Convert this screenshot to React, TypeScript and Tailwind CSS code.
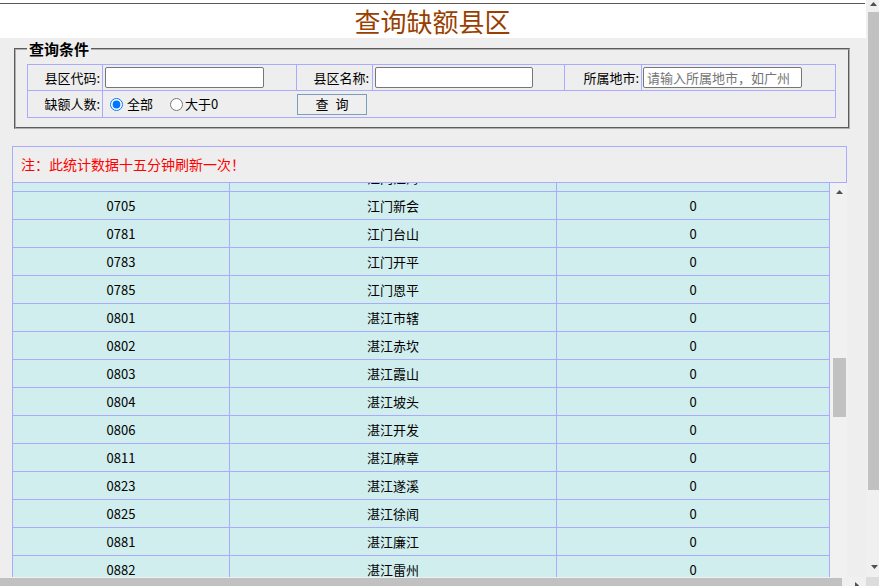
import React from "react";

const rows: [string, string][] = [
  ["0704", "江门江海"],
  ["0705", "江门新会"],
  ["0781", "江门台山"],
  ["0783", "江门开平"],
  ["0785", "江门恩平"],
  ["0801", "湛江市辖"],
  ["0802", "湛江赤坎"],
  ["0803", "湛江霞山"],
  ["0804", "湛江坡头"],
  ["0806", "湛江开发"],
  ["0811", "湛江麻章"],
  ["0823", "湛江遂溪"],
  ["0825", "湛江徐闻"],
  ["0881", "湛江廉江"],
  ["0882", "湛江雷州"],
];

const font = { fontFamily: '"Noto Sans CJK SC", "Microsoft YaHei", sans-serif' };

function Tri({ dir }: { dir: "up" | "down" | "right" }) {
  const pts =
    dir === "up" ? "0,4 3.5,0 7,4" : dir === "down" ? "0,0 7,0 3.5,4" : "0,0 4,3.5 0,7";
  const w = dir === "right" ? 4 : 7;
  const h = dir === "right" ? 7 : 4;
  return (
    <svg width={w} height={h} viewBox={`0 0 ${w} ${h}`} className="block">
      <polygon points={pts} fill="#505050" />
    </svg>
  );
}

export default function App() {
  return (
    <div
      className="w-[879px] h-[586px] overflow-hidden flex flex-col bg-[#eeeeee] text-black"
      style={font}
    >
      <div className="flex h-[577px]">
        {/* page */}
        <div className="w-[866px] h-[577px] overflow-hidden flex flex-col bg-[#eeeeee]">
          <div className="h-[38px] bg-white pt-[3px] shrink-0">
            <div className="h-[35px] border-t border-[#5a5a5a] flex items-center justify-center w-[865px]">
              <h1 className="text-[26px] leading-[30px] text-[#993f00] font-normal">查询缺额县区</h1>
            </div>
          </div>

          <fieldset className="ml-[14px] mt-[3px] w-[836px] border-2 [border-style:groove] border-[#b0b0b0] px-[10px] pt-[7px] pb-[9px] shrink-0 min-w-0">
            <legend className="ml-[1px] px-[2px] text-[15px] leading-[16px] font-bold">查询条件</legend>
            <div className="ml-[1px] w-[809px] grid grid-cols-[75px_194px_76px_192px_77px_194px] border-l border-t border-[#aaaaff] text-[13px]">
              <div className="h-[26px] border-r border-b border-[#aaaaff] flex items-center justify-end pr-[2px]">县区代码:</div>
              <div className="h-[26px] border-r border-b border-[#aaaaff] flex items-center pl-[2px]">
                <input className="w-[159px] h-[21px] bg-white border border-[#767676] rounded-[2px] px-[2px] text-[13px] outline-none" />
              </div>
              <div className="h-[26px] border-r border-b border-[#aaaaff] flex items-center justify-end pr-[3px]">县区名称:</div>
              <div className="h-[26px] border-r border-b border-[#aaaaff] flex items-center pl-[2px]">
                <input className="w-[158px] h-[21px] bg-white border border-[#767676] rounded-[2px] px-[2px] text-[13px] outline-none" />
              </div>
              <div className="h-[26px] border-r border-b border-[#aaaaff] flex items-center justify-end pr-[2px]">所属地市:</div>
              <div className="h-[26px] border-r border-b border-[#aaaaff] flex items-center pl-[1px]">
                <input
                  placeholder="请输入所属地市，如广州"
                  className="w-[159px] h-[21px] bg-white border border-[#767676] rounded-[2px] px-[3px] text-[13px] outline-none placeholder:text-[#757575]"
                />
              </div>

              <div className="h-[27px] border-r border-b border-[#aaaaff] flex items-center justify-end pr-[2px]">缺额人数:</div>
              <div className="col-span-5 h-[27px] border-r border-b border-[#aaaaff] flex items-center">
                <div className="w-[193px] flex items-center pl-[2px]">
                  <input type="radio" name="n" defaultChecked className="ml-[5px] mr-[4px] w-[13px] h-[13px]" />
                  <span>全部</span>
                  <input type="radio" name="n" className="ml-[17px] mr-[2px] w-[13px] h-[13px]" />
                  <span>大于0</span>
                </div>
                <button className="ml-[1px] w-[70px] h-[21px] border border-[#7b9ebb] bg-[#efefef] flex items-center justify-center gap-[7px] text-[13px]">
                  <span>查</span>
                  <span>询</span>
                </button>
              </div>
            </div>
          </fieldset>

          <div className="ml-[12px] mt-[17px] w-[835px] h-[37px] border border-[#aaaaff] bg-[#eeeeee] flex items-center pl-[8px] text-[14px] text-[#ff0000] shrink-0">
            注：此统计数据十五分钟刷新一次！
          </div>

          <div className="ml-[12px] w-[835px] h-[394px] flex overflow-hidden shrink-0">
            <div className="w-[818px] h-[394px] overflow-hidden">
              <div className="mt-[-20px] border-l border-r border-[#aaaaff] text-[13px]">
                {rows.map(([code, name]) => (
                  <div key={code} className="grid grid-cols-[217px_327px_272px] h-[28px] border-t border-[#aaaaff] bg-[#d0eeee]">
                    <div className="border-r border-[#aaaaff] flex items-center justify-center">{code}</div>
                    <div className="border-r border-[#aaaaff] flex items-center justify-center">{name}</div>
                    <div className="flex items-center justify-center">0</div>
                  </div>
                ))}
              </div>
            </div>
            <div className="w-[17px] h-[394px] bg-[#f1f1f1] flex flex-col items-center">
              <div className="mt-[7px] ml-[1px]">
                <Tri dir="up" />
              </div>
              <div className="mt-[164px] ml-[2px] w-[13px] h-[59px] bg-[#c1c1c1]" />
            </div>
          </div>
        </div>

        {/* outer vertical scrollbar */}
        <div className="w-[13px] h-[577px] bg-[#f0f0f0] flex flex-col">
          <div className="h-[12px] flex items-start justify-center pt-[2px] pl-[2px]">
            <Tri dir="up" />
          </div>
          <div className="ml-[2px] w-[11px] h-[478px] bg-[#c1c1c1]" />
          <div className="flex-1 flex items-end justify-center pb-[8px] pl-[4px]">
            <Tri dir="down" />
          </div>
        </div>
      </div>

      {/* outer horizontal scrollbar */}
      <div className="flex h-[9px]">
        <div className="w-[866px] h-[9px] bg-[#f0f0f0] flex">
          <div className="w-[842px] mt-[1px] h-[8px] bg-[#c1c1c1]" />
          <div className="ml-[13px] mt-[5px]">
            <Tri dir="right" />
          </div>
        </div>
        <div className="w-[13px] h-[9px] bg-[#dcdcdc]" />
      </div>
    </div>
  );
}
